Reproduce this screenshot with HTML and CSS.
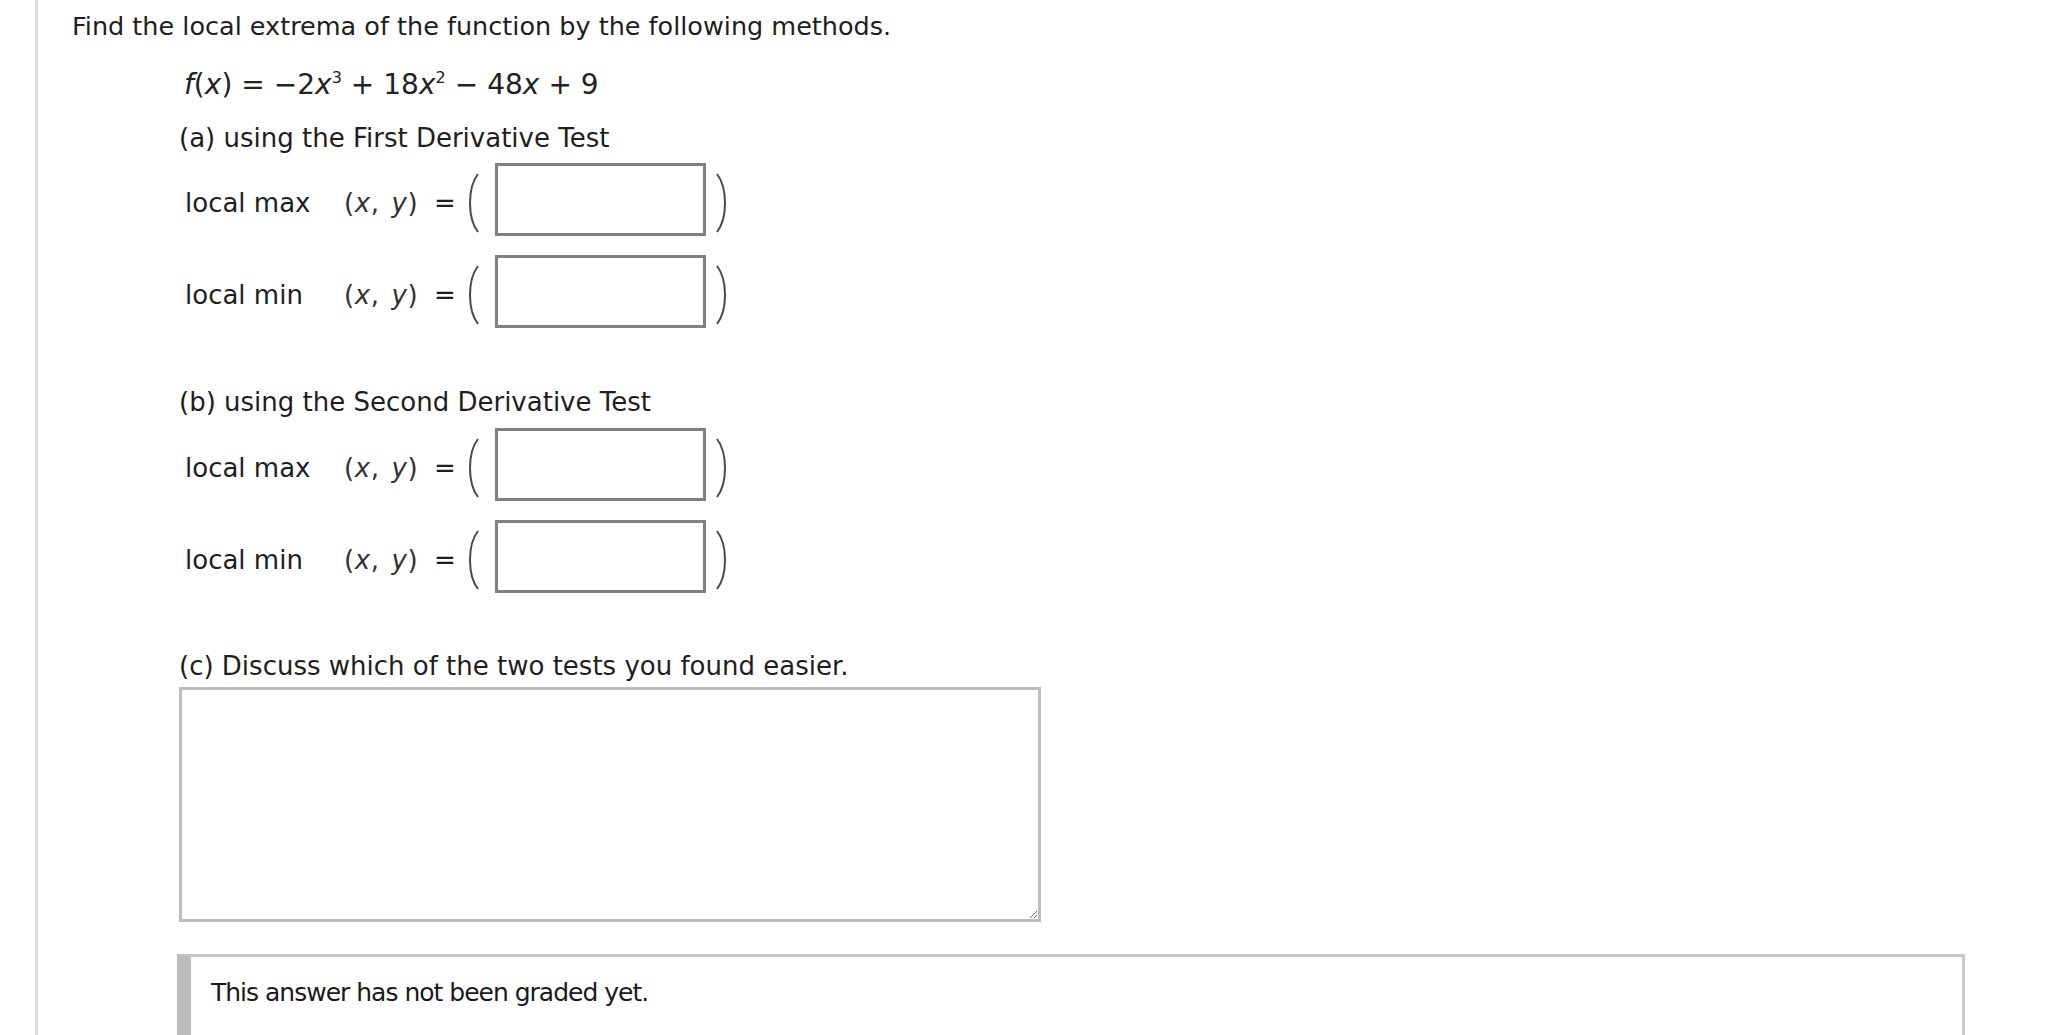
FILE: index.html
```html
<!DOCTYPE html>
<html>
<head>
<meta charset="utf-8">
<link rel="stylesheet" href="styles.css">
</head>
<body>
<div class="page">
  <p class="prompt">Find the local extrema of the function by the following methods.</p>
  <div class="content">
    <p class="eq"><i>f</i>(<i>x</i>)<span class="op">=</span>&minus;2<i>x</i><sup>3</sup><span class="op">+</span>18<i>x</i><sup>2</sup><span class="op">&minus;</span>48<i>x</i><span class="op">+</span>9</p>
    <p class="part">(a) using the First Derivative Test</p>
    <div class="row">
      <span class="lab">local max</span><span class="xy">(<i>x</i>, <i>y</i>)</span><span class="eqs">=</span>
      <svg class="paren" viewBox="0 0 15 60"><path d="M12 1 C5 10 4 20 4 30 C4 40 5 50 12 59"/></svg><input class="ans" type="text"><svg class="paren paren-r" viewBox="0 0 15 60"><path d="M3 1 C10 10 11 20 11 30 C11 40 10 50 3 59"/></svg>
    </div>
    <div class="row">
      <span class="lab">local min</span><span class="xy">(<i>x</i>, <i>y</i>)</span><span class="eqs">=</span>
      <svg class="paren" viewBox="0 0 15 60"><path d="M12 1 C5 10 4 20 4 30 C4 40 5 50 12 59"/></svg><input class="ans" type="text"><svg class="paren paren-r" viewBox="0 0 15 60"><path d="M3 1 C10 10 11 20 11 30 C11 40 10 50 3 59"/></svg>
    </div>
    <p class="part part-b">(b) using the Second Derivative Test</p>
    <div class="row">
      <span class="lab">local max</span><span class="xy">(<i>x</i>, <i>y</i>)</span><span class="eqs">=</span>
      <svg class="paren" viewBox="0 0 15 60"><path d="M12 1 C5 10 4 20 4 30 C4 40 5 50 12 59"/></svg><input class="ans" type="text"><svg class="paren paren-r" viewBox="0 0 15 60"><path d="M3 1 C10 10 11 20 11 30 C11 40 10 50 3 59"/></svg>
    </div>
    <div class="row">
      <span class="lab">local min</span><span class="xy">(<i>x</i>, <i>y</i>)</span><span class="eqs">=</span>
      <svg class="paren" viewBox="0 0 15 60"><path d="M12 1 C5 10 4 20 4 30 C4 40 5 50 12 59"/></svg><input class="ans" type="text"><svg class="paren paren-r" viewBox="0 0 15 60"><path d="M3 1 C10 10 11 20 11 30 C11 40 10 50 3 59"/></svg>
    </div>
    <p class="part part-c">(c) Discuss which of the two tests you found easier.</p>
    <textarea class="discuss"></textarea>
    <div class="graded">
      <p class="graded-text">This answer has not been graded yet.</p>
    </div>
  </div>
</div>
</body>
</html>
```

FILE: styles.css
```css
html, body {
  margin: 0;
  padding: 0;
  background: #ffffff;
}
html {
  height: 1035px;
  overflow: hidden;
}
body {
  font-family: "DejaVu Sans", Verdana, sans-serif;
  color: #1e1e1e;
  font-size: 26px;
}
.page {
  margin-left: 35px;
  border-left: 3px solid #dcdcdc;
  height: 1035px;
  box-sizing: border-box;
  padding-left: 34px;
  padding-top: 11px;
}
p { margin: 0; }
.prompt {
  font-size: 25.5px;
  line-height: 30px;
}
.content {
  padding-left: 107px;
  display: flex;
  flex-direction: column;
  align-items: flex-start;
}
.eq {
  margin-top: 29px;
  margin-left: 5px;
  font-size: 28px;
  line-height: 30px;
  color: #222;
}
.eq .op {
  margin: 0 9px;
}
.eq sup {
  font-size: 16px;
  vertical-align: 11px;
  line-height: 0;
}
.part {
  margin-top: 23px;
  line-height: 30px;
}
.row {
  display: flex;
  align-items: center;
  margin-left: 6px;
  margin-top: 10px;
  height: 73px;
}
.row + .row { margin-top: 19px; }
.lab, .xy, .eqs {
  padding-top: 6px;
}
.lab {
  width: 159px;
}
.xy {
  color: #333;
  width: 90px;
  letter-spacing: 0.6px;
  word-spacing: 3px;
}
.eqs {
  width: 32px;
}
.paren {
  width: 15px;
  height: 60px;
  margin-top: 6px;
  fill: none;
  stroke: #4a4a4a;
  stroke-width: 2;
}
.ans {
  width: 211px;
  height: 73px;
  box-sizing: border-box;
  border: 3px solid #808080;
  margin: 0 8px 0 14px;
  padding: 0;
  background: #fff;
}
.part-b { margin-top: 59px; }
.part-b + .row { margin-top: 11px; }
.part-c { margin-top: 58px; }
.discuss {
  margin-top: 6px;
  width: 862px;
  height: 235px;
  box-sizing: border-box;
  border: 3px solid #bdbdbd;
  resize: both;
  padding: 0;
}
.graded {
  margin-top: 32px;
  box-sizing: border-box;
  width: 1788px;
  margin-left: -2px;
  border: 3px solid #c8c8c8;
  border-left: 14px solid #bdbdbd;
  border-bottom: none;
  height: 90px;
  padding: 21px 0 0 20px;
}
.graded-text {
  font-size: 25px;
  line-height: 30px;
  letter-spacing: -1px;
  color: #1a1a1a;
}
```
